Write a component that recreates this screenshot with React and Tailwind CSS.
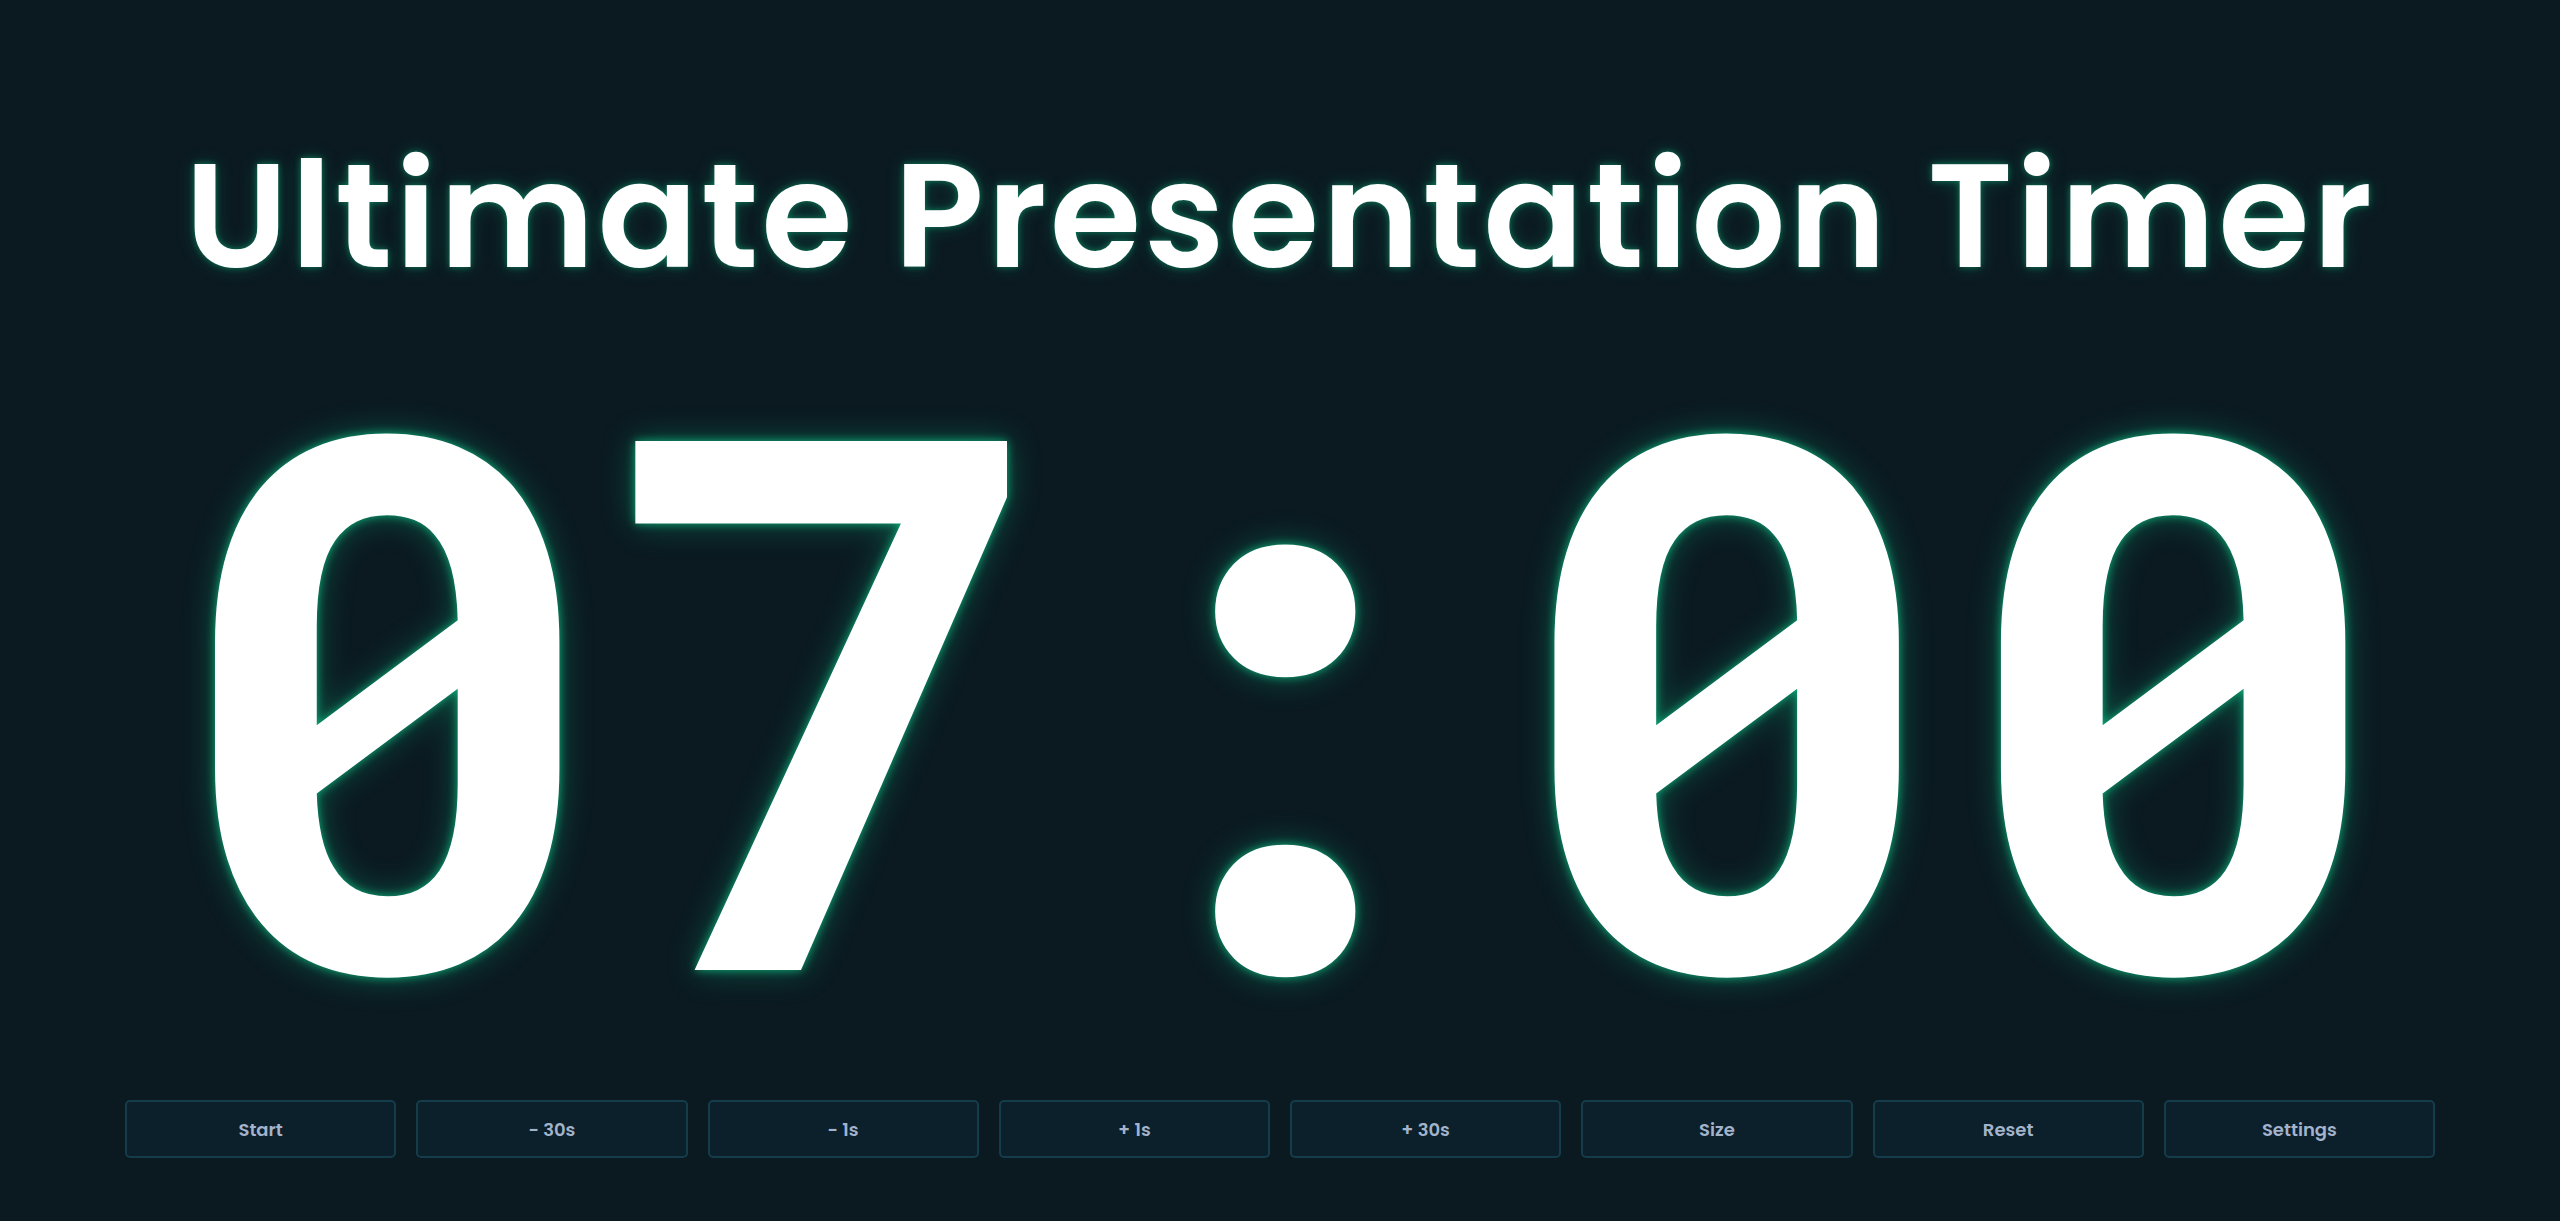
import React from "react";

const buttons = ["Start", "- 30s", "- 1s", "+ 1s", "+ 30s", "Size", "Reset", "Settings"];

export default function App() {
  return (
    <div className="w-full h-[1221px] bg-[#0b1a21] flex flex-col items-center pt-[142px] overflow-hidden">
      <h1
        className="text-[148px] leading-none font-semibold tracking-[3px] text-white whitespace-nowrap [font-family:Poppins,Inter,'Noto_Sans',sans-serif] [text-shadow:0_0_6px_rgba(16,185,129,0.55),0_0_18px_rgba(16,185,129,0.25)]"
      >
        Ultimate Presentation Timer
      </h1>
      <div
        className="mt-[19px] text-[744px] leading-none font-bold text-white whitespace-nowrap slashed-zero tabular-nums [font-family:'Roboto_Mono',monospace] [text-shadow:0_0_10px_rgba(16,185,129,0.9),0_0_32px_rgba(16,185,129,0.4)]"
      >
        07:00
      </div>
      <div className="mt-[47px] w-full px-[125px] grid grid-cols-8 gap-5">
        {buttons.map((b) => (
          <button
            key={b}
            className="h-[58px] rounded-[5px] border-2 border-[#143c4a] bg-[#0b202a] text-[#a3b3cc] text-[18px] font-semibold [font-family:Poppins,Inter,sans-serif]"
          >
            {b}
          </button>
        ))}
      </div>
    </div>
  );
}
